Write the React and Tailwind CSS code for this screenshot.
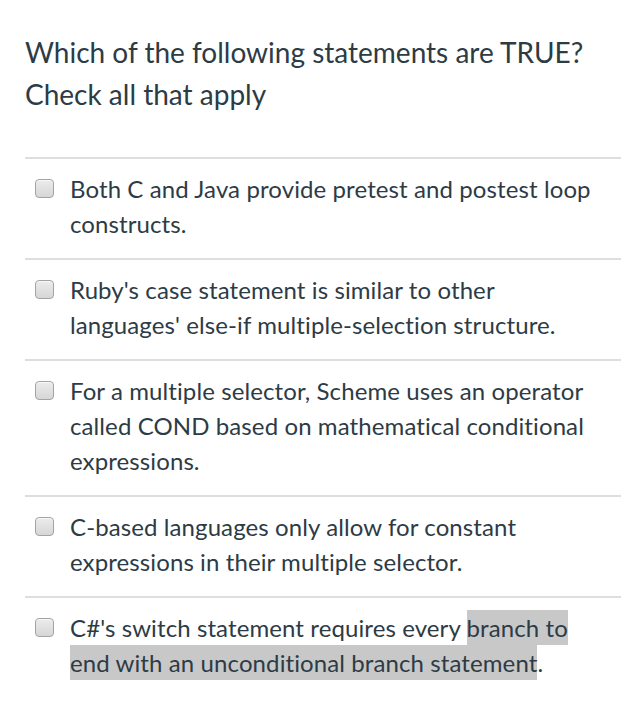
export default function App() {
  const items = [
    "Both C and Java provide pretest and postest loop constructs.",
    "Ruby's case statement is similar to other languages' else-if multiple-selection structure.",
    "For a multiple selector, Scheme uses an operator called COND based on mathematical conditional expressions.",
    "C-based languages only allow for constant expressions in their multiple selector.",
  ];
  const Box = () => (
    <div className="mt-[8px] h-[19px] w-[19px] shrink-0 rounded-[4px] border border-[#a3a3a3] bg-gradient-to-b from-[#ececec] to-[#d6d6d6] shadow-[inset_0_1px_0_#f8f8f8]" />
  );
  return (
    <div className="min-h-[724px] w-[644px] bg-white [font-variant-ligatures:none]" style={{ fontFamily: "Lato, 'Open Sans', sans-serif" }}>
      <div className="w-[596px] ml-[25px] pt-[31px]">
        <div className="text-[28px] leading-[42px] text-[#2d3b45]">
          Which of the following statements are TRUE?
          <br />
          Check all that apply
        </div>
        <div className="mt-[42px]">
          {items.map((t, i) => (
            <div key={i} className="flex gap-[16px] border-t-2 border-[#dedede] pl-[10px] pr-[22px] pt-[12px] pb-[17px]">
              <Box />
              <div className="text-[24px] leading-[35px] tracking-[0.1px] text-[#2d3b45]">{t}</div>
            </div>
          ))}
          <div className="flex gap-[16px] border-t-2 border-[#dedede] pl-[10px] pr-[22px] pt-[12px] pb-[17px]">
            <Box />
            <div className="text-[24px] leading-[35px] tracking-[0.1px] text-[#2d3b45]">
              C#'s switch statement requires every{" "}
              <span className="bg-[#c8c8c8] py-[3px] box-decoration-clone">branch to end with an unconditional branch statement</span>.
            </div>
          </div>
        </div>
      </div>
    </div>
  );
}
